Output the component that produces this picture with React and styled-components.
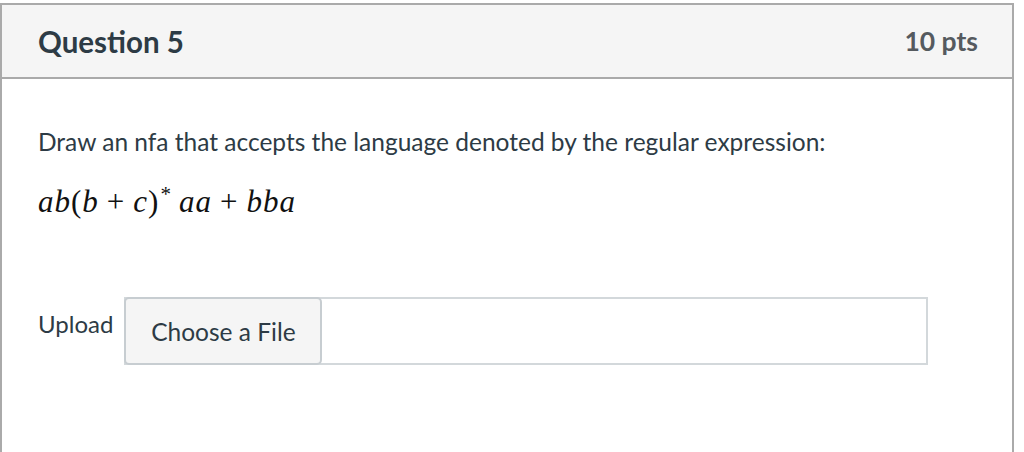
import styled, { createGlobalStyle } from "styled-components";

const GlobalStyle = createGlobalStyle`
  body {
    margin: 0;
    background: #fff;
    font-family: Lato, "Open Sans", sans-serif;
    color: #2d3b45;
  }
`;

const Card = styled.div`
  margin-top: 3px;
  width: 1010px;
  height: 460px;
  border: 2px solid #aaaaaa;
  border-bottom: none;
`;

const Header = styled.div`
  display: flex;
  justify-content: space-between;
  align-items: center;
  height: 72px;
  padding: 0 34px 0 36px;
  background: #f5f5f5;
  border-bottom: 2px solid #aaaaaa;
`;

const Title = styled.h2`
  margin: 0;
  font-size: 29.5px;
  font-weight: 700;
  color: #2d3b45;
`;

const Points = styled.span`
  font-size: 26.5px;
  font-weight: 700;
  color: #555a5f;
`;

const Body = styled.div`
  padding: 48px 36px 0;
`;

const Prompt = styled.p`
  margin: 0;
  font-size: 24.5px;
  line-height: 30px;
`;

const Formula = styled.div`
  margin-top: 28px;
  font-family: "Liberation Serif", "DejaVu Serif", serif;
  font-size: 31px;
  line-height: 34px;
  color: #111;
  letter-spacing: 1px;
`;

const Var = styled.i`
  font-style: italic;
`;

const Op = styled.span`
  margin: 0 ${(p) => p.gap || 0}px;
`;

const Star = styled.sup`
  font-size: 21px;
  line-height: 0;
  margin: 0 7px 0 1px;
`;

const UploadRow = styled.div`
  display: flex;
  align-items: flex-start;
  margin-top: 78px;
`;

const Label = styled.span`
  font-size: 24px;
  margin: 12px 11px 0 0;
`;

const FileField = styled.div`
  display: flex;
  width: 800px;
  height: 64px;
  border: 2px solid #d3d8db;
`;

const ChooseButton = styled.button`
  width: 198px;
  height: 68px;
  margin: -2px 0 0 -2px;
  background: #f5f5f5;
  border: 2px solid #c7cdd1;
  border-radius: 5px;
  font-family: Lato, sans-serif;
  font-size: 24.5px;
  color: #2d3b45;
  cursor: pointer;
`;

export default function App() {
  return (
    <>
      <GlobalStyle />
      <Card>
        <Header>
          <Title>Question 5</Title>
          <Points>10 pts</Points>
        </Header>
        <Body>
          <Prompt>Draw an nfa that accepts the language denoted by the regular expression:</Prompt>
          <Formula>
            <Var>ab</Var>(<Var>b</Var>
            <Op gap={8}>+</Op>
            <Var>c</Var>)<Star>*</Star>
            <Var>aa</Var>
            <Op gap={8}>+</Op>
            <Var>bba</Var>
          </Formula>
          <UploadRow>
            <Label>Upload</Label>
            <FileField>
              <ChooseButton>Choose a File</ChooseButton>
            </FileField>
          </UploadRow>
        </Body>
      </Card>
    </>
  );
}
